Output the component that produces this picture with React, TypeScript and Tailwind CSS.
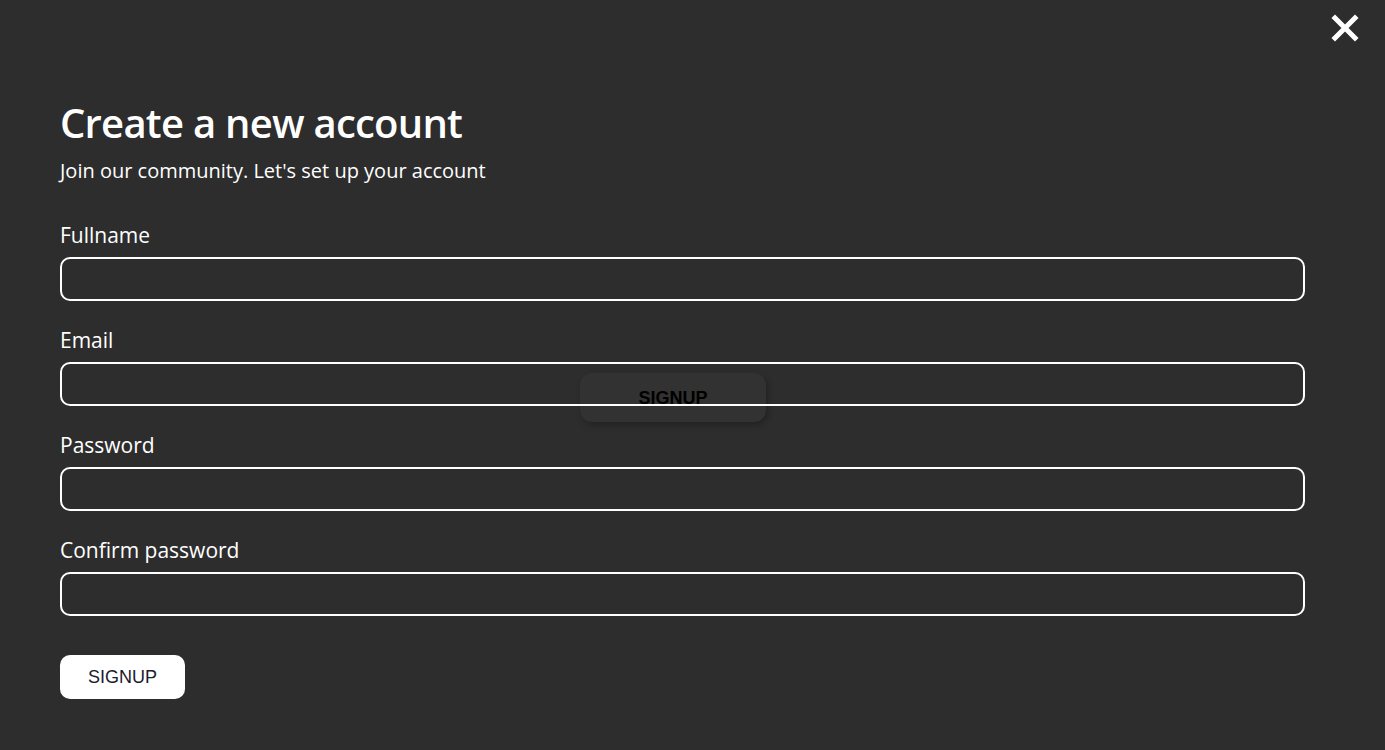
import { useState } from 'react'

const fields = ['Fullname', 'Email', 'Password', 'Confirm password']

export default function App() {
  const [values, setValues] = useState<Record<string, string>>({})

  return (
    <div className="relative min-h-screen bg-[#2d2d2d] font-['Open_Sans',sans-serif] text-white">
      <button className="absolute right-[26px] top-[14px] h-[28px] w-[28px]" aria-label="Close">
        <svg viewBox="0 0 28 28" className="h-full w-full">
          <path d="M4 4 L24 24 M24 4 L4 24" stroke="white" strokeWidth="5" strokeLinecap="square" />
        </svg>
      </button>

      {/* faded duplicate button left behind the form */}
      <div className="absolute left-[580px] top-[373px] flex h-[49px] w-[186px] items-center justify-center rounded-xl bg-[#323232] pt-[2px] font-['Liberation_Sans',Arial,sans-serif] text-[18px] font-bold text-black shadow-[2px_3px_6px_rgba(0,0,0,0.25)]">
        SIGNUP
      </div>

      <div className="relative px-[60px] pt-[96px]">
        <h1 className="text-[40px] font-semibold leading-[54px] tracking-[-0.75px]">Create a new account</h1>
        <p className="mt-[8px] text-[20px] leading-[26px]">Join our community. Let's set up your account</p>

        <form className="mt-[39px] flex w-[1245px] flex-col gap-[27px]" onSubmit={e => e.preventDefault()}>
          {fields.map(f => (
            <label key={f} className="flex flex-col gap-[9px]">
              <span className="text-[21px] leading-[25px]">{f}</span>
              <input
                type={f.includes('assword') ? 'password' : f === 'Email' ? 'email' : 'text'}
                value={values[f] ?? ''}
                onChange={e => setValues({ ...values, [f]: e.target.value })}
                className="h-[44px] rounded-[10px] border-2 border-white bg-transparent px-3 text-white outline-none"
              />
            </label>
          ))}
          <button
            type="submit"
            className="mt-[12px] h-[44px] w-[125px] rounded-[10px] bg-white font-['Liberation_Sans',Arial,sans-serif] text-[18px] text-[#1a1a2e]"
          >
            SIGNUP
          </button>
        </form>
      </div>
    </div>
  )
}
